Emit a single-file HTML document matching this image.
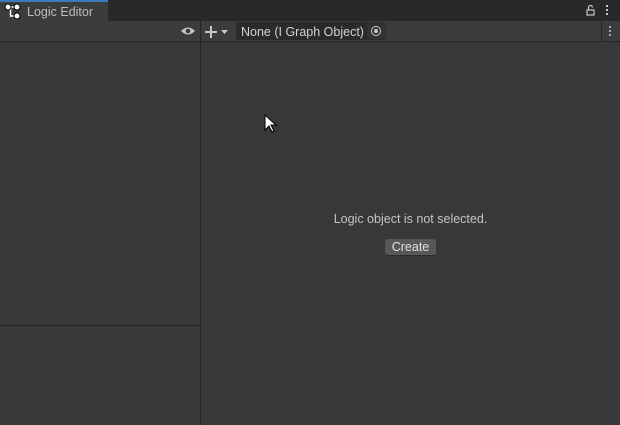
<!DOCTYPE html>
<html><head><style>
body{margin:0;width:620px;height:425px;background:#383838;font-family:"Liberation Sans",sans-serif;overflow:hidden;position:relative;color:#c4c4c4}
.a{position:absolute}
</style></head><body>
<div class="a" style="left:0;top:0;width:620px;height:21px;background:#282828"></div>
<div class="a" style="left:0;top:0;width:108px;height:21px;background:#3c3c3c;border-top:2px solid #3a79bb;box-sizing:border-box"></div>
<svg class="a" style="left:4px;top:3px" width="22" height="17" viewBox="0 0 22 17"><path d="M6 4h4M6.5 5v8h4" stroke="#fff" stroke-width="1.5" fill="none"/><g fill="#fff" stroke="#000" stroke-width="1"><circle cx="4" cy="4" r="3"/><circle cx="13" cy="4" r="3"/><circle cx="13" cy="13" r="3"/></g></svg>
<div class="a" style="left:27px;top:5px;font-size:12.5px;color:#bdbdbd">Logic Editor</div>
<svg class="a" style="left:585px;top:4px" width="12" height="12"><rect x="2" y="6" width="7" height="5" fill="none" stroke="#c8c8c8" stroke-width="1.2"/><path d="M3.5 6V3.5a2 2 0 0 1 4 0" fill="none" stroke="#c8c8c8" stroke-width="1.2"/></svg>
<div class="a" style="left:606px;top:5px;width:2px;height:2px;background:#c8c8c8;box-shadow:0 4px #c8c8c8,0 8px #c8c8c8"></div>
<div class="a" style="left:0;top:21px;width:620px;height:20px;background:#3c3c3c;border-bottom:1px solid #232323"></div>
<svg class="a" style="left:180px;top:25px" width="16" height="12"><path d="M1 6Q8 -1 15 6Q8 13 1 6Z" fill="#c4c4c4"/><circle cx="8" cy="6" r="2.3" fill="#3c3c3c"/></svg>
<div class="a" style="left:200px;top:21px;width:1px;height:404px;background:#232323"></div>
<svg class="a" style="left:204px;top:25px" width="26" height="14"><path d="M7 1v12M1 7h12" stroke="#c8c8c8" stroke-width="2"/><path d="M17 5h7l-3.5 4z" fill="#c8c8c8"/></svg>
<div class="a" style="left:236px;top:22px;width:150px;height:18px;background:#2a2a2a;border-radius:3px"></div>
<div class="a" style="left:241px;top:25px;font-size:12.5px;color:#d2d2d2">None (I Graph Object)</div>
<div class="a" style="left:367px;top:23px;width:19px;height:16px;background:#333"></div>
<div class="a" style="left:371px;top:26px;width:8px;height:8px;border:1px solid #c8c8c8;border-radius:50%"></div>
<div class="a" style="left:374px;top:29px;width:4px;height:4px;background:#c8c8c8;border-radius:50%"></div>
<div class="a" style="left:601px;top:21px;width:1px;height:20px;background:#2a2a2a"></div>
<div class="a" style="left:609px;top:26px;width:2px;height:2px;background:#aaa;box-shadow:0 4px #aaa,0 8px #aaa"></div>
<div class="a" style="left:0;top:325px;width:200px;height:1px;background:#232323"></div>
<div class="a" style="left:201px;top:212px;width:419px;text-align:center;font-size:12.5px;color:#c4c4c4">Logic object is not selected.</div>
<div class="a" style="left:385px;top:239px;width:51px;height:17px;background:#585858;border-radius:3px;border-bottom:1px solid #2a2a2a;box-sizing:border-box;text-align:center;font-size:12.5px;line-height:16px;color:#e0e0e0">Create</div>
<svg class="a" style="left:264px;top:114px" width="14" height="20"><path d="M1 1v15l4-4 3 6 2-1-3-6h5z" fill="#fff" stroke="#000" stroke-width="1"/></svg>
</body></html>
